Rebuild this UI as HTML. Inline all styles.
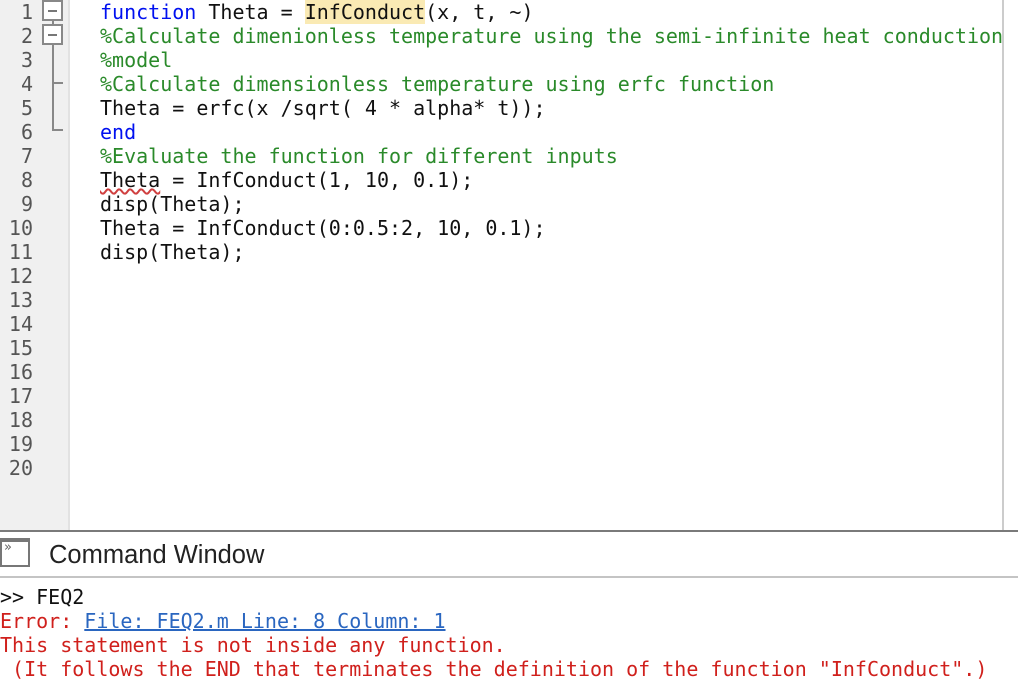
<!DOCTYPE html>
<html><head><style>
body{margin:0;width:1018px;height:694px;overflow:hidden;background:#fff;position:relative;font-family:"DejaVu Sans Mono","Liberation Mono",monospace;}
.gut{position:absolute;left:0;top:0;width:68px;height:530px;background:#f0f0f0;border-right:2px solid #e2e2e2;}
.ln{position:absolute;left:0;width:33px;text-align:right;font-size:20px;line-height:24px;color:#555;}
.code{position:absolute;left:100px;top:0;font-size:20px;line-height:24px;white-space:pre;color:#111;}
.k{color:#0010f0}.c{color:#2a8a2a}.hl{background:#faeab4}
.fb{position:absolute;width:21px;height:21px;border:2px solid #888;box-sizing:border-box;background:#fff;left:42px}
.fb::after{content:"";position:absolute;left:4px;right:4px;top:8px;height:2px;background:#777}
.cmd{position:absolute;left:0;top:585px;font-size:20px;line-height:24px;white-space:pre;color:#111}
.r{color:#d0201c}.a{color:#2a66c0;text-decoration:underline}
</style></head><body>
<div class="gut"></div>
<div class="ln" style="top:0">1<br>2<br>3<br>4<br>5<br>6<br>7<br>8<br>9<br>10<br>11<br>12<br>13<br>14<br>15<br>16<br>17<br>18<br>19<br>20</div>
<div style="position:absolute;left:52px;top:14px;width:2px;height:116px;background:#888"></div>
<div style="position:absolute;left:52px;top:82px;width:11px;height:2px;background:#888"></div>
<div style="position:absolute;left:52px;top:129px;width:11px;height:2px;background:#888"></div>
<div class="fb" style="top:0px"></div>
<div class="fb" style="top:24px"></div>
<div class="code"><span class="k">function</span> Theta = <span class="hl">InfConduct</span>(x, t, ~)
<span class="c">%Calculate dimenionless temperature using the semi-infinite heat conduction</span>
<span class="c">%model</span>
<span class="c">%Calculate dimensionless temperature using erfc function</span>
Theta = erfc(x /sqrt( 4 * alpha* t));
<span class="k">end</span>
<span class="c">%Evaluate the function for different inputs</span>
<span style="text-decoration:underline wavy #d04040">Theta</span> = InfConduct(1, 10, 0.1);
disp(Theta);
Theta = InfConduct(0:0.5:2, 10, 0.1);
disp(Theta);</div>
<div style="position:absolute;left:1002px;top:0;width:2px;height:530px;background:#ccc"></div>
<div style="position:absolute;left:0;top:530px;width:1018px;height:2px;background:#7a7a7a"></div>
<div style="position:absolute;left:0px;top:538px;width:30px;height:29px;border:2px solid #777;box-sizing:border-box;border-top-width:4px;font-size:13px;line-height:12px;color:#666;font-family:'DejaVu Sans',sans-serif;padding-left:2px">&raquo;</div>
<div style="position:absolute;left:49px;top:540px;font-family:'Liberation Sans',sans-serif;font-size:25.5px;line-height:30px;color:#222">Command Window</div>
<div style="position:absolute;left:0;top:576px;width:1018px;height:2px;background:#c4c4c4"></div>
<div class="cmd">&gt;&gt; FEQ2
<span class="r">Error: </span><span class="a">File: FEQ2.m Line: 8 Column: 1</span>
<span class="r">This statement is not inside any function.</span>
<span class="r"> (It follows the END that terminates the definition of the function "InfConduct".)</span></div>
</body></html>
